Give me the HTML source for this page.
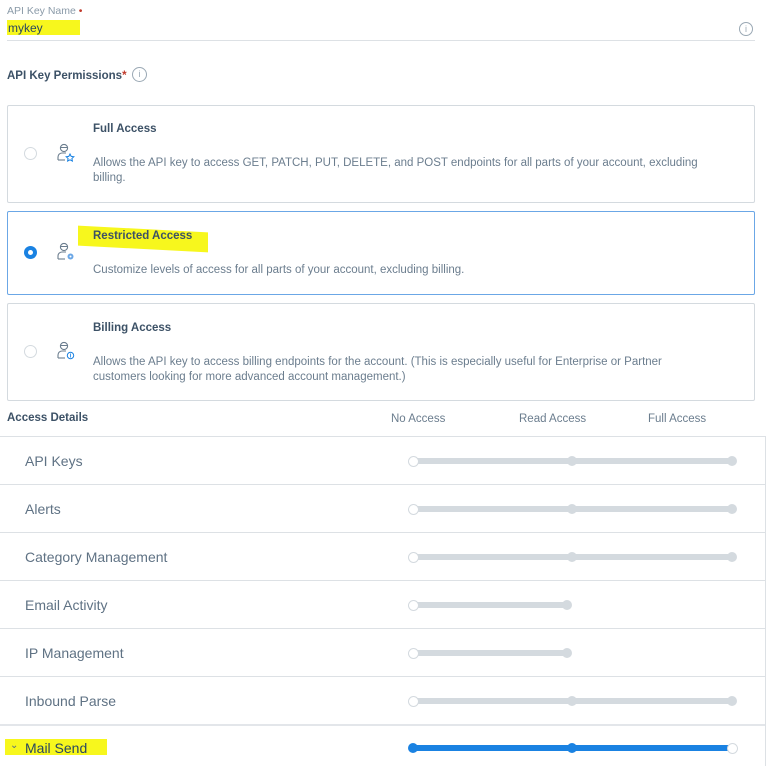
<!DOCTYPE html>
<html><head><style>
body{margin:0;width:768px;height:766px;overflow:hidden;background:#fff;font-family:"Liberation Sans",sans-serif;color:#546b81;position:relative}
.a{position:absolute}
.card{position:absolute;left:7px;width:746px;border:1px solid #d4dadf;border-radius:2px;background:#fff}
.t{font-size:11.5px;font-weight:bold;color:#3c5166}
.d{font-size:11.5px;color:#6b7d8e;line-height:15px}
.radio{position:absolute;left:24px;width:11px;height:11px;border:1px solid #d4dadf;border-radius:50%;background:#fff}
.row{position:absolute;left:0;width:765px;height:47px;border-top:1px solid #dde1e5}
.row span{position:absolute;left:25px;top:16px;font-size:14px;color:#5f7284}
.hl{background:#f7f71d}
.tr{position:absolute;height:6px;background:#d4dadf;border-radius:3px}
.dot{position:absolute;width:10px;height:10px;border-radius:50%;background:#d4dadf}
.o{background:#fff;border:1px solid #d4dadf;width:9px;height:9px}
</style></head><body>
<div class="a" style="left:7px;top:5px;font-size:10.5px;color:#8a9aa8">API Key Name <span style="color:#c0392b">•</span></div>
<div class="a hl" style="left:7px;top:20px;width:73px;height:15px"></div>
<div class="a" style="left:8px;top:21px;font-size:12px;color:#294661">mykey</div>
<div class="a" style="left:7px;top:40px;width:748px;height:1px;background:#dde1e5"></div>
<div class="a" style="left:739px;top:22px;width:12px;height:12px;border:1px solid #9aa8b4;border-radius:50%;font-size:9px;text-align:center;line-height:12px;color:#9aa8b4">i</div>
<div class="a t" style="left:7px;top:70px;font-size:11.5px">API Key Permissions<span style="color:#c0392b">*</span></div>
<div class="a" style="left:132px;top:67px;width:13px;height:13px;border:1px solid #9aa8b4;border-radius:50%;font-size:9px;text-align:center;line-height:13px;color:#9aa8b4">i</div>

<svg width="0" height="0" style="position:absolute"><defs>
<g id="p"><circle cx="8" cy="5" r="3.6" fill="none" stroke="#6b7d8e" stroke-width="1.1"/><path d="M4.6 4.5h6.8" stroke="#6b7d8e" stroke-width="1"/><path d="M2 17v-3a4 4 0 0 1 4-4h4" fill="none" stroke="#6b7d8e" stroke-width="1.1"/><path d="M2 17h7" stroke="#6b7d8e" stroke-width="1.1"/></g>
</defs></svg>

<div class="card" style="top:105px;height:96px"></div>
<div class="radio" style="top:147px"></div>
<svg class="a" style="left:56px;top:143px" width="20" height="20"><use href="#p"/><path d="M14 11l1.2 2.4 2.6.3-1.9 1.8.5 2.6-2.4-1.3-2.4 1.3.5-2.6-1.9-1.8 2.6-.3z" fill="none" stroke="#1a82e2" stroke-width="1"/></svg>
<div class="a t" style="left:93px;top:123px">Full Access</div>
<div class="a d" style="left:93px;top:156px;width:625px">Allows the API key to access GET, PATCH, PUT, DELETE, and POST endpoints for all parts of your account, excluding billing.</div>

<div class="card" style="top:211px;height:82px;border-color:#6ba7e6"></div>
<div class="a" style="left:24px;top:246px;width:13px;height:13px;border-radius:50%;background:#1a82e2"></div>
<div class="a" style="left:28px;top:250px;width:5px;height:5px;border-radius:50%;background:#fff"></div>
<svg class="a" style="left:56px;top:242px" width="20" height="20"><use href="#p"/><circle cx="14.5" cy="14.5" r="3" fill="#6ba7e6"/><circle cx="14.5" cy="14.5" r="1" fill="#fff"/></svg>
<div class="a hl" style="left:78px;top:229px;width:130px;height:20px;transform:skewY(3deg)"></div>
<div class="a t" style="left:93px;top:230px">Restricted Access</div>
<div class="a d" style="left:93px;top:263px">Customize levels of access for all parts of your account, excluding billing.</div>

<div class="card" style="top:303px;height:96px"></div>
<div class="radio" style="top:345px"></div>
<svg class="a" style="left:56px;top:341px" width="20" height="20"><use href="#p"/><circle cx="14.5" cy="14.5" r="3.2" fill="none" stroke="#1a82e2" stroke-width="1"/><path d="M14.5 12.5v4" stroke="#1a82e2" stroke-width="0.8"/></svg>
<div class="a t" style="left:93px;top:322px">Billing Access</div>
<div class="a d" style="left:93px;top:355px;width:625px">Allows the API key to access billing endpoints for the account. (This is especially useful for Enterprise or Partner customers looking for more advanced account management.)</div>

<div class="a t" style="left:7px;top:412px">Access Details</div>
<div class="a d" style="left:391px;top:412px">No Access</div>
<div class="a d" style="left:519px;top:412px">Read Access</div>
<div class="a d" style="left:648px;top:412px">Full Access</div>
<div class="a" style="left:765px;top:436px;width:1px;height:330px;background:#dde1e5"></div>

<div class="row" style="top:436px"><span>API Keys</span></div>
<div class="row" style="top:484px"><span>Alerts</span></div>
<div class="row" style="top:532px"><span>Category Management</span></div>
<div class="row" style="top:580px"><span>Email Activity</span></div>
<div class="row" style="top:628px"><span>IP Management</span></div>
<div class="row" style="top:676px"><span>Inbound Parse</span></div>
<div class="row" style="top:724px;border-top:2px solid #e3e6ea"></div>
<div class="a hl" style="left:5px;top:739px;width:102px;height:16px"></div>
<div class="a" style="left:10px;top:740px;font-size:10px;color:#546b81">⌄</div>
<div class="a" style="left:25px;top:740px;font-size:14px;color:#294661">Mail Send</div>

<div class="tr" style="left:414px;top:458px;width:318px"></div><div class="dot o" style="left:408px;top:456px"></div><div class="dot" style="left:567px;top:456px"></div><div class="dot" style="left:727px;top:456px"></div>
<div class="tr" style="left:414px;top:506px;width:318px"></div><div class="dot o" style="left:408px;top:504px"></div><div class="dot" style="left:567px;top:504px"></div><div class="dot" style="left:727px;top:504px"></div>
<div class="tr" style="left:414px;top:554px;width:318px"></div><div class="dot o" style="left:408px;top:552px"></div><div class="dot" style="left:567px;top:552px"></div><div class="dot" style="left:727px;top:552px"></div>
<div class="tr" style="left:414px;top:602px;width:154px"></div><div class="dot o" style="left:408px;top:600px"></div><div class="dot" style="left:562px;top:600px"></div>
<div class="tr" style="left:414px;top:650px;width:154px"></div><div class="dot o" style="left:408px;top:648px"></div><div class="dot" style="left:562px;top:648px"></div>
<div class="tr" style="left:414px;top:698px;width:318px"></div><div class="dot o" style="left:408px;top:696px"></div><div class="dot" style="left:567px;top:696px"></div><div class="dot" style="left:727px;top:696px"></div>
<div class="tr" style="left:414px;top:745px;width:318px;background:#1a82e2"></div><div class="dot" style="left:408px;top:743px;background:#1a82e2"></div><div class="dot" style="left:567px;top:743px;background:#1a82e2"></div><div class="dot o" style="left:727px;top:743px"></div>
</body></html>
